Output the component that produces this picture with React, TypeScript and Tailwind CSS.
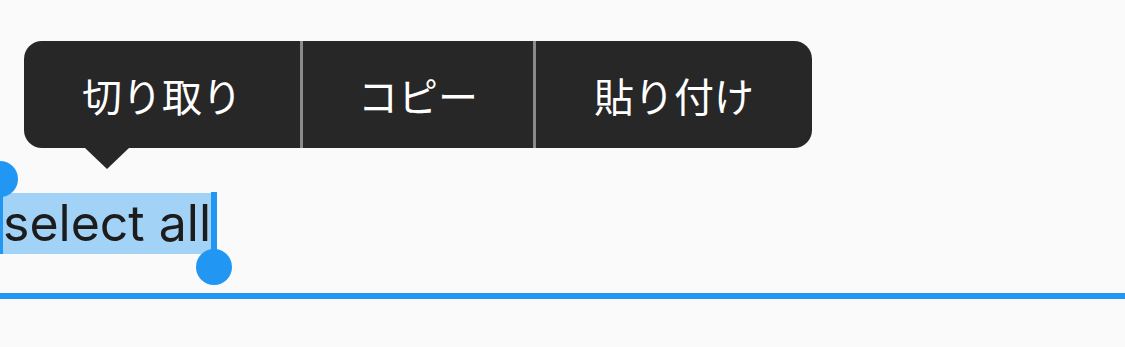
import React from "react";

export default function App() {
  return (
    <div className="relative w-full h-[347px] bg-[#fafafa] overflow-hidden">
      <div className="pt-[193px]">
        <div className="flex">
          <span
            className="relative inline-block h-[61px] pr-[3px] bg-[#a3d2f7] text-[50px] leading-[61px] text-[#1c1c1c]"
            style={{ fontFamily: "Inter, Roboto, sans-serif" }}
          >
            <span className="pl-[3px]">select all</span>
            <span className="absolute left-[-3px] top-0 w-[6px] h-[61px] bg-[#2196f3]" />
            <span className="absolute left-[-18px] top-[-32px] w-[36px] h-[36px] rounded-full bg-[#2196f3]" />
            <span className="absolute right-[-3px] top-[-1px] w-[6px] h-[74px] bg-[#2196f3]" />
            <span className="absolute right-[-18px] top-[56px] w-[36px] h-[36px] rounded-full bg-[#2196f3]" />
          </span>
        </div>
        <div className="mt-[39px] h-[6px] bg-[#2196f3]" />
      </div>

      <div
        className="absolute left-[24px] top-[41px] h-[107px] w-[788px] rounded-[18px] bg-[#272727] flex text-white text-[40px]"
        style={{ fontFamily: "'Noto Sans CJK JP', sans-serif" }}
      >
        <div className="w-[276px] flex items-center justify-center">切り取り</div>
        <div className="w-[3px] bg-[#8a8a8a]" />
        <div className="w-[230px] flex items-center justify-center">コピー</div>
        <div className="w-[3px] bg-[#8a8a8a]" />
        <div className="w-[276px] flex items-center justify-center">貼り付け</div>
        <div className="absolute left-[61px] top-[107px] w-0 h-0 border-x-[22px] border-x-transparent border-t-[21px] border-t-[#272727]" />
      </div>
    </div>
  );
}
